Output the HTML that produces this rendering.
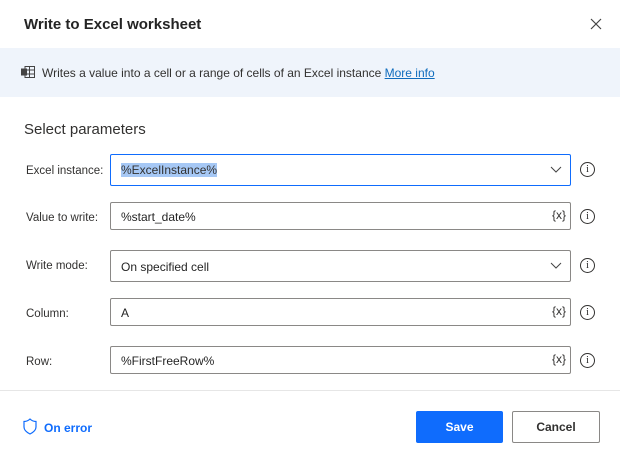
<!DOCTYPE html>
<html><head><style>
body{margin:0;width:620px;height:463px;background:#fff;font-family:"Liberation Sans",sans-serif;color:#242424;position:relative;overflow:hidden}
.a{position:absolute}
.lbl{position:absolute;left:26px;font-size:11.5px;color:#323130}
.box{position:absolute;left:110px;width:461px;border:1px solid #8a8886;border-radius:2px;box-sizing:border-box;font-size:12px}
.box span{position:absolute;left:10px}
.fx{position:absolute;right:4px;font-size:12px;color:#323130}
.info{position:absolute;left:580px;width:13px;height:13px;border:1px solid #323130;border-radius:50%;font-size:10px;text-align:center;line-height:13px;font-family:"Liberation Serif",serif}
</style></head><body>
<div class="a" style="left:24px;top:16px;font-size:15px;font-weight:bold;color:#242424">Write to Excel worksheet</div>
<svg class="a" style="left:590px;top:18px" width="12" height="12"><path d="M1 1L11 11M11 1L1 11" stroke="#444" stroke-width="1.2"/></svg>
<div class="a" style="left:0;top:48px;width:620px;height:49px;background:#eff4fb"></div>
<svg class="a" style="left:21px;top:66px" width="14" height="12"><rect x="4" y="0.5" width="9.5" height="11" fill="none" stroke="#444"/><path d="M4 4h9.5M4 8h9.5M8.5 0.5v11" stroke="#444"/><rect x="0" y="2.5" width="6" height="7" fill="#444"/></svg>
<div class="a" style="left:42px;top:66px;font-size:12px;color:#323130">Writes a value into a cell or a range of cells of an Excel instance <span style="color:#0f6cbd;text-decoration:underline">More info</span></div>
<div class="a" style="left:24px;top:121px;font-size:15px;color:#323130">Select parameters</div>

<div class="lbl" style="top:165px">Excel instance:</div>
<div class="box" style="top:154px;height:32px;border:1px solid #0f6cfd"><span style="top:8px;background:#a6c8f5;color:#323130;left:10px">%ExcelInstance%</span>
<svg class="a" style="right:8px;top:11px" width="12" height="8"><path d="M1 1l5 5 5-5" stroke="#444" fill="none"/></svg></div>
<div class="info" style="top:162px">i</div>

<div class="lbl" style="top:212px">Value to write:</div>
<div class="box" style="top:202px;height:28px"><span style="top:7px">%start_date%</span><div class="fx" style="top:5px">{x}</div></div>
<div class="info" style="top:209px">i</div>

<div class="lbl" style="top:260px">Write mode:</div>
<div class="box" style="top:250px;height:32px"><span style="top:9px">On specified cell</span>
<svg class="a" style="right:8px;top:11px" width="12" height="8"><path d="M1 1l5 5 5-5" stroke="#444" fill="none"/></svg></div>
<div class="info" style="top:258px">i</div>

<div class="lbl" style="top:308px">Column:</div>
<div class="box" style="top:298px;height:28px"><span style="top:7px">A</span><div class="fx" style="top:5px">{x}</div></div>
<div class="info" style="top:305px">i</div>

<div class="lbl" style="top:356px">Row:</div>
<div class="box" style="top:346px;height:28px"><span style="top:7px">%FirstFreeRow%</span><div class="fx" style="top:5px">{x}</div></div>
<div class="info" style="top:353px">i</div>

<div class="a" style="left:0;top:390px;width:620px;height:1px;background:#e6e6e6"></div>
<svg class="a" style="left:23px;top:418px" width="14" height="17"><path d="M7 1C5 3 3 3.5 1 3.5V9c0 3.5 3 5.5 6 7 3-1.5 6-3.5 6-7V3.5C11 3.5 9 3 7 1z" fill="none" stroke="#0f6cfd" stroke-width="1.2"/></svg>
<div class="a" style="left:44px;top:421px;font-size:12px;color:#0f6cfd;font-weight:bold">On error</div>
<div class="a" style="left:416px;top:411px;width:87px;height:32px;background:#0f6cfd;border-radius:2px;color:#fff;font-size:12px;font-weight:bold;text-align:center;line-height:32px">Save</div>
<div class="a" style="left:512px;top:411px;width:88px;height:32px;border:1px solid #8a8886;box-sizing:border-box;border-radius:2px;font-size:12px;font-weight:bold;text-align:center;line-height:30px;color:#323130">Cancel</div>
</body></html>
